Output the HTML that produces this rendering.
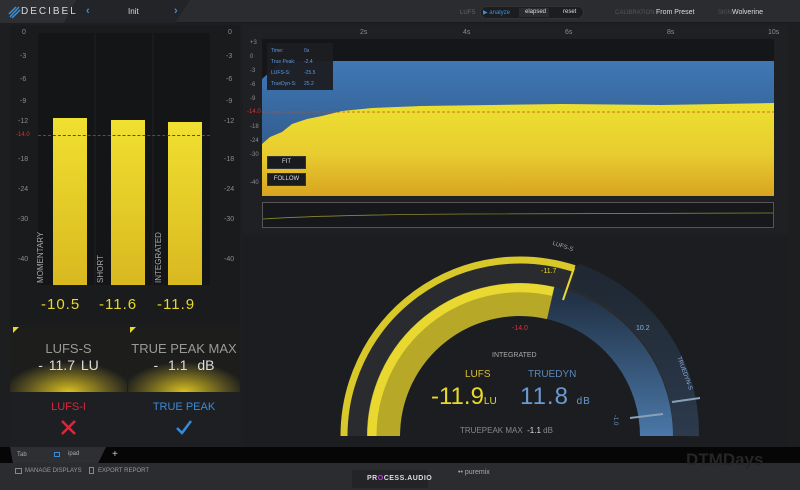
<!DOCTYPE html>
<html><head><meta charset="utf-8"><style>
*{margin:0;padding:0;box-sizing:border-box}
body{width:800px;height:490px;background:#1d1e20;font-family:"Liberation Sans",sans-serif;position:relative;overflow:hidden;color:#ccc}
.a{position:absolute}
.t{font-size:7px;color:#8a8c90}
.y{color:#e8d82a}
</style></head><body>
<!-- top bar -->
<div class="a" style="left:0;top:0;width:800px;height:23px;background:#2b2c2f;border-bottom:1px solid #1a1a1c"></div>
<div class="a" style="left:0;top:0;width:190px;height:23px;background:#232427;clip-path:polygon(0 0,100% 0,92% 100%,0 100%)"></div>
<div class="a" style="left:0;top:0;width:80px;height:23px;background:#2e2f32;clip-path:polygon(0 0,95% 0,80% 100%,0 100%)"></div>
<svg class="a" style="left:8px;top:5px" width="14" height="14"><path d="M2 12L11 2M4 13L12 5M1 9L8 2" stroke="#3d8fd9" stroke-width="1.5"/></svg>
<div class="a" style="left:21px;top:6px;font-size:10px;letter-spacing:2px;color:#d8d8d8">DECIBEL</div>
<div class="a" style="left:86px;top:5px;font-size:11px;color:#3d8fd9;font-weight:bold">‹</div>
<div class="a" style="left:128px;top:7px;font-size:8px;color:#ddd">Init</div>
<div class="a" style="left:174px;top:5px;font-size:11px;color:#3d8fd9;font-weight:bold">›</div>
<div class="a t" style="left:460px;top:10px;font-size:6px;color:#666">LUFS</div>
<div class="a" style="left:480px;top:6px;width:104px;height:13px;border-radius:7px;background:#1c1d20;border:1px solid #333"></div>
<div class="a" style="left:483px;top:9px;font-size:6px;color:#3d8fd9">▶ analyze</div>
<div class="a" style="left:519px;top:8px;width:30px;height:9px;background:#2a2b2e"></div>
<div class="a" style="left:525px;top:9px;font-size:6px;color:#ddd">elapsed</div>
<div class="a" style="left:563px;top:9px;font-size:6px;color:#ddd">reset</div>
<div class="a" style="left:615px;top:10px;font-size:6px;color:#555">CALIBRATION</div>
<div class="a" style="left:656px;top:9px;font-size:7px;color:#ddd">From Preset</div>
<div class="a" style="left:718px;top:10px;font-size:6px;color:#555">SKIN</div>
<div class="a" style="left:732px;top:9px;font-size:7px;color:#ddd">Wolverine</div>

<!-- left meter panel -->
<div class="a" style="left:10px;top:25px;width:230px;height:300px;background:#1a1b1d"></div>
<div class="a" style="left:38px;top:33px;width:56px;height:252px;background:#141517"></div>
<div class="a" style="left:96px;top:33px;width:56px;height:252px;background:#141517"></div>
<div class="a" style="left:154px;top:33px;width:56px;height:252px;background:#141517"></div>
<div class="a" style="left:53px;top:118px;width:34px;height:167px;background:linear-gradient(#f0e030,#d9b820)"></div>
<div class="a" style="left:111px;top:120px;width:34px;height:165px;background:linear-gradient(#f0e030,#d9b820)"></div>
<div class="a" style="left:168px;top:122px;width:34px;height:163px;background:linear-gradient(#f0e030,#d9b820)"></div>
<div class="a" style="left:38px;top:135px;width:172px;border-top:1px dashed #a03020"></div>
<div class="a" style="left:16px;top:132px;font-size:6px;color:#e03030">-14.0</div>
<div class="a t" style="left:22px;top:29px">0</div><div class="a t" style="left:20px;top:53px">-3</div><div class="a t" style="left:20px;top:76px">-6</div><div class="a t" style="left:20px;top:98px">-9</div><div class="a t" style="left:18px;top:118px">-12</div><div class="a t" style="left:18px;top:156px">-18</div><div class="a t" style="left:18px;top:186px">-24</div><div class="a t" style="left:18px;top:216px">-30</div><div class="a t" style="left:18px;top:256px">-40</div>
<div class="a t" style="left:228px;top:29px">0</div><div class="a t" style="left:226px;top:53px">-3</div><div class="a t" style="left:226px;top:76px">-6</div><div class="a t" style="left:226px;top:98px">-9</div><div class="a t" style="left:224px;top:118px">-12</div><div class="a t" style="left:224px;top:156px">-18</div><div class="a t" style="left:224px;top:186px">-24</div><div class="a t" style="left:224px;top:216px">-30</div><div class="a t" style="left:224px;top:256px">-40</div>
<div class="a" style="left:36px;top:283px;font-size:8px;color:#aaa;transform:rotate(-90deg);transform-origin:0 0">MOMENTARY</div>
<div class="a" style="left:96px;top:283px;font-size:8px;color:#aaa;transform:rotate(-90deg);transform-origin:0 0">SHORT</div>
<div class="a" style="left:154px;top:283px;font-size:8px;color:#aaa;transform:rotate(-90deg);transform-origin:0 0">INTEGRATED</div>
<div class="a y" style="left:41px;top:296px;font-size:15px;letter-spacing:1px">-10.5</div>
<div class="a y" style="left:99px;top:296px;font-size:15px;letter-spacing:1px">-11.6</div>
<div class="a y" style="left:157px;top:296px;font-size:15px;letter-spacing:1px">-11.9</div>

<!-- cards -->
<div class="a" style="left:10px;top:325px;width:117px;height:67px;background:radial-gradient(ellipse 55% 45% at 50% 100%,#d8c020,#5a5220 65%,#1d1e1c)"></div>
<div class="a" style="left:128px;top:325px;width:112px;height:67px;background:radial-gradient(ellipse 55% 45% at 50% 100%,#d8c020,#5a5220 65%,#1d1e1c)"></div>
<div class="a" style="left:13px;top:327px;width:6px;height:6px;background:#e8d82a;clip-path:polygon(0 0,100% 0,0 100%)"></div>
<div class="a" style="left:130px;top:327px;width:6px;height:6px;background:#e8d82a;clip-path:polygon(0 0,100% 0,0 100%)"></div>
<div class="a" style="left:10px;top:341px;width:117px;text-align:center;font-size:13px;color:#999">LUFS-S</div>
<div class="a" style="left:10px;top:357px;width:117px;text-align:center;font-size:14px;color:#ddd;word-spacing:2px">- 11.7 LU</div>
<div class="a" style="left:128px;top:341px;width:112px;text-align:center;font-size:13px;color:#999;white-space:nowrap">TRUE PEAK MAX</div>
<div class="a" style="left:128px;top:357px;width:112px;text-align:center;font-size:14px;color:#ddd;word-spacing:6px">- 1.1 dB</div>
<div class="a" style="left:10px;top:393px;width:117px;height:54px;background:#1e1f22"></div>
<div class="a" style="left:128px;top:393px;width:112px;height:54px;background:#1e1f22"></div>
<div class="a" style="left:10px;top:401px;width:117px;text-align:center;font-size:11px;color:#d8283c">LUFS-I</div>
<div class="a" style="left:128px;top:401px;width:112px;text-align:center;font-size:11px;color:#3a8ad8">TRUE PEAK</div>
<svg class="a" style="left:60px;top:419px" width="17" height="17"><path d="M2 2L15 15M15 2L2 15" stroke="#d8283c" stroke-width="2.5"/></svg>
<svg class="a" style="left:175px;top:419px" width="18" height="17"><path d="M2 9L7 14L16 2" stroke="#3a8ad8" stroke-width="2.5" fill="none"/></svg>

<!-- tab bar -->
<div class="a" style="left:0;top:447px;width:800px;height:16px;background:#060607"></div>
<div class="a" style="left:10px;top:447px;width:96px;height:16px;background:#2e2f32;clip-path:polygon(0 0,100% 0,92% 100%,3% 100%)"></div>
<div class="a" style="left:17px;top:452px;font-size:6px;color:#aaa">Tab</div>
<div class="a" style="left:54px;top:452px;width:6px;height:5px;border:1px solid #3a8ad8"></div>
<div class="a" style="left:68px;top:451px;font-size:6px;color:#aaa">ipad</div>
<div class="a" style="left:112px;top:449px;font-size:10px;color:#ccc">+</div>
<div class="a" style="left:0;top:463px;width:800px;height:27px;background:#2b2c2f"></div>
<div class="a" style="left:15px;top:468px;width:7px;height:6px;border:1px solid #888"></div>
<div class="a" style="left:25px;top:468px;font-size:6px;color:#999">MANAGE DISPLAYS</div>
<div class="a" style="left:89px;top:467px;width:5px;height:7px;border:1px solid #888"></div>
<div class="a" style="left:98px;top:468px;font-size:6px;color:#999">EXPORT REPORT</div>
<div class="a" style="left:352px;top:470px;width:76px;height:18px;background:#232427"></div>
<div class="a" style="left:367px;top:475px;font-size:7px;font-weight:bold;color:#ddd;letter-spacing:.5px">PR<span style="color:#c040e0">O</span>CESS.AUDIO</div>
<div class="a" style="left:458px;top:469px;font-size:7px;color:#aaa">•• puremix</div>
<div class="a" style="left:686px;top:450px;font-size:17px;font-weight:bold;color:#252628">DTMDays</div>

<!-- graph panel -->
<div class="a" style="left:243px;top:25px;width:545px;height:208px;background:#1f2023"></div>
<div class="a t" style="left:360px;top:29px">2s</div>
<div class="a t" style="left:463px;top:29px">4s</div>
<div class="a t" style="left:565px;top:29px">6s</div>
<div class="a t" style="left:667px;top:29px">8s</div>
<div class="a t" style="left:768px;top:29px">10s</div>
<div class="a" style="left:262px;top:39px;width:512px;height:157px;background:#15161a"></div>
<svg class="a" style="left:262px;top:39px" width="512" height="157">
<defs><linearGradient id="b" x1="0" y1="0" x2="0" y2="1"><stop offset="0" stop-color="#3f78b5"/><stop offset="1" stop-color="#2c4d78"/></linearGradient>
<linearGradient id="yy" x1="0" y1="0" x2="0" y2="1"><stop offset="0" stop-color="#ede030"/><stop offset=".55" stop-color="#e8cc30"/><stop offset="1" stop-color="#d8a420"/></linearGradient></defs>
<path d="M20 22H512V157H0V40L20 22Z" fill="url(#b)"/>
<path d="M0 105L8 98L20 93L30 85L45 80L60 77L80 72L110 69L160 67L300 65L400 66L512 64V157H0Z" fill="url(#yy)"/>
<path d="M0 73H512" stroke="#c05020" stroke-dasharray="3 2" stroke-width=".7"/>
</svg>
<div class="a t" style="left:250px;top:36px;line-height:14px;font-size:6px">+3<br>0<br>-3<br>-6<br>-9<br><br>-18<br>-24<br>-30<br><br>-40</div>
<div class="a" style="left:247px;top:109px;font-size:6px;color:#e03030">-14.0</div>
<div class="a" style="left:267px;top:43px;width:66px;height:47px;background:#1c1d21;opacity:.95"></div>
<div class="a" style="left:271px;top:46px;font-size:5px;color:#5a9ae0;line-height:11px">Time:<br>True Peak:<br>LUFS-S:<br>TrueDyn-S:</div>
<div class="a" style="left:304px;top:46px;font-size:5px;color:#5a9ae0;line-height:11px">0s<br>-2.4<br>-25.5<br>25.2</div>
<div class="a" style="left:267px;top:156px;width:39px;height:13px;background:#1a1b1e;border:1px solid #333;font-size:6px;color:#ddd;text-align:center;line-height:11px">FIT</div>
<div class="a" style="left:267px;top:173px;width:39px;height:13px;background:#1a1b1e;border:1px solid #333;font-size:6px;color:#ddd;text-align:center;line-height:11px">FOLLOW</div>
<div class="a" style="left:262px;top:202px;width:512px;height:26px;border:1px solid #555;background:#17181b"></div>
<svg class="a" style="left:263px;top:203px" width="510" height="24"><path d="M0 16Q60 12 200 11T510 10" stroke="#8a8a30" fill="none" stroke-width=".8"/></svg>

<!-- gauge panel -->
<div class="a" style="left:243px;top:236px;width:545px;height:211px;background:#1c1d20"></div>
<svg class="a" style="left:243px;top:236px" width="545" height="211" viewBox="243 236 545 211">
<defs>
<linearGradient id="bl" x1="0" y1="0" x2="0" y2="1"><stop offset="0" stop-color="#223348"/><stop offset="1" stop-color="#4a78a8"/></linearGradient>
<linearGradient id="bl2" x1="0" y1="0" x2="0" y2="1"><stop offset="0" stop-color="#1f2833"/><stop offset="1" stop-color="#2c3a4c"/></linearGradient>
</defs>
<path d="M354 436A166 166 0 0 1 686 436" stroke="#2a2b2e" stroke-width="26" fill="none"/>
<path d="M574.4 276A166 166 0 0 1 686 436" stroke="url(#bl2)" stroke-width="26" fill="none"/>
<path d="M344 436A176 176 0 0 1 574.4 268.6" stroke="#d8c82a" stroke-width="7" fill="none"/>
<path d="M383.5 436A136.5 136.5 0 0 1 656.5 436" stroke="url(#bl)" stroke-width="33" fill="none"/>
<path d="M383.5 436A136.5 136.5 0 0 1 550.7 303" stroke="#b8a828" stroke-width="33" fill="none"/>
<path d="M372 436A148 148 0 0 1 553 291.5" stroke="#e8d830" stroke-width="9" fill="none"/>
<path d="M574 268L563 300" stroke="#e8d830" stroke-width="2"/>
<path d="M672 402L700 398M630 418L663 414" stroke="#8aa0b8" stroke-width="2"/>
</svg>
<div class="a" style="left:552px;top:244px;font-size:6px;color:#aaa;transform:rotate(18deg)">LUFS-S</div>
<div class="a" style="left:541px;top:268px;font-size:7px;color:#e8d82a">-11.7</div>
<div class="a" style="left:512px;top:325px;font-size:7px;color:#e03030">-14.0</div>
<div class="a" style="left:636px;top:325px;font-size:7px;color:#8ab0d8">10.2</div>
<div class="a" style="left:681px;top:356px;font-size:6px;color:#8ab0d8;transform:rotate(70deg);transform-origin:0 0">TRUEDYN-S</div>
<div class="a" style="left:618px;top:415px;font-size:6px;color:#6a9ad0;transform:rotate(90deg);transform-origin:0 0">-1.0</div>
<div class="a" style="left:492px;top:352px;font-size:7px;color:#aaa">INTEGRATED</div>
<div class="a" style="left:465px;top:369px;font-size:10px;color:#d8c030">LUFS</div>
<div class="a" style="left:528px;top:369px;font-size:10px;color:#5a88b8">TRUEDYN</div>
<div class="a" style="left:431px;top:383px;font-size:24px;color:#e8d82a">-11.9<span style="font-size:10px">LU</span></div>
<div class="a" style="left:520px;top:383px;font-size:24px;color:#6a9ad0;letter-spacing:1px">11.8 <span style="font-size:10px">dB</span></div>
<div class="a" style="left:460px;top:426px;font-size:8px;color:#888">TRUEPEAK MAX &nbsp;<span style="color:#ddd">-1.1</span> dB</div>
</body></html>
